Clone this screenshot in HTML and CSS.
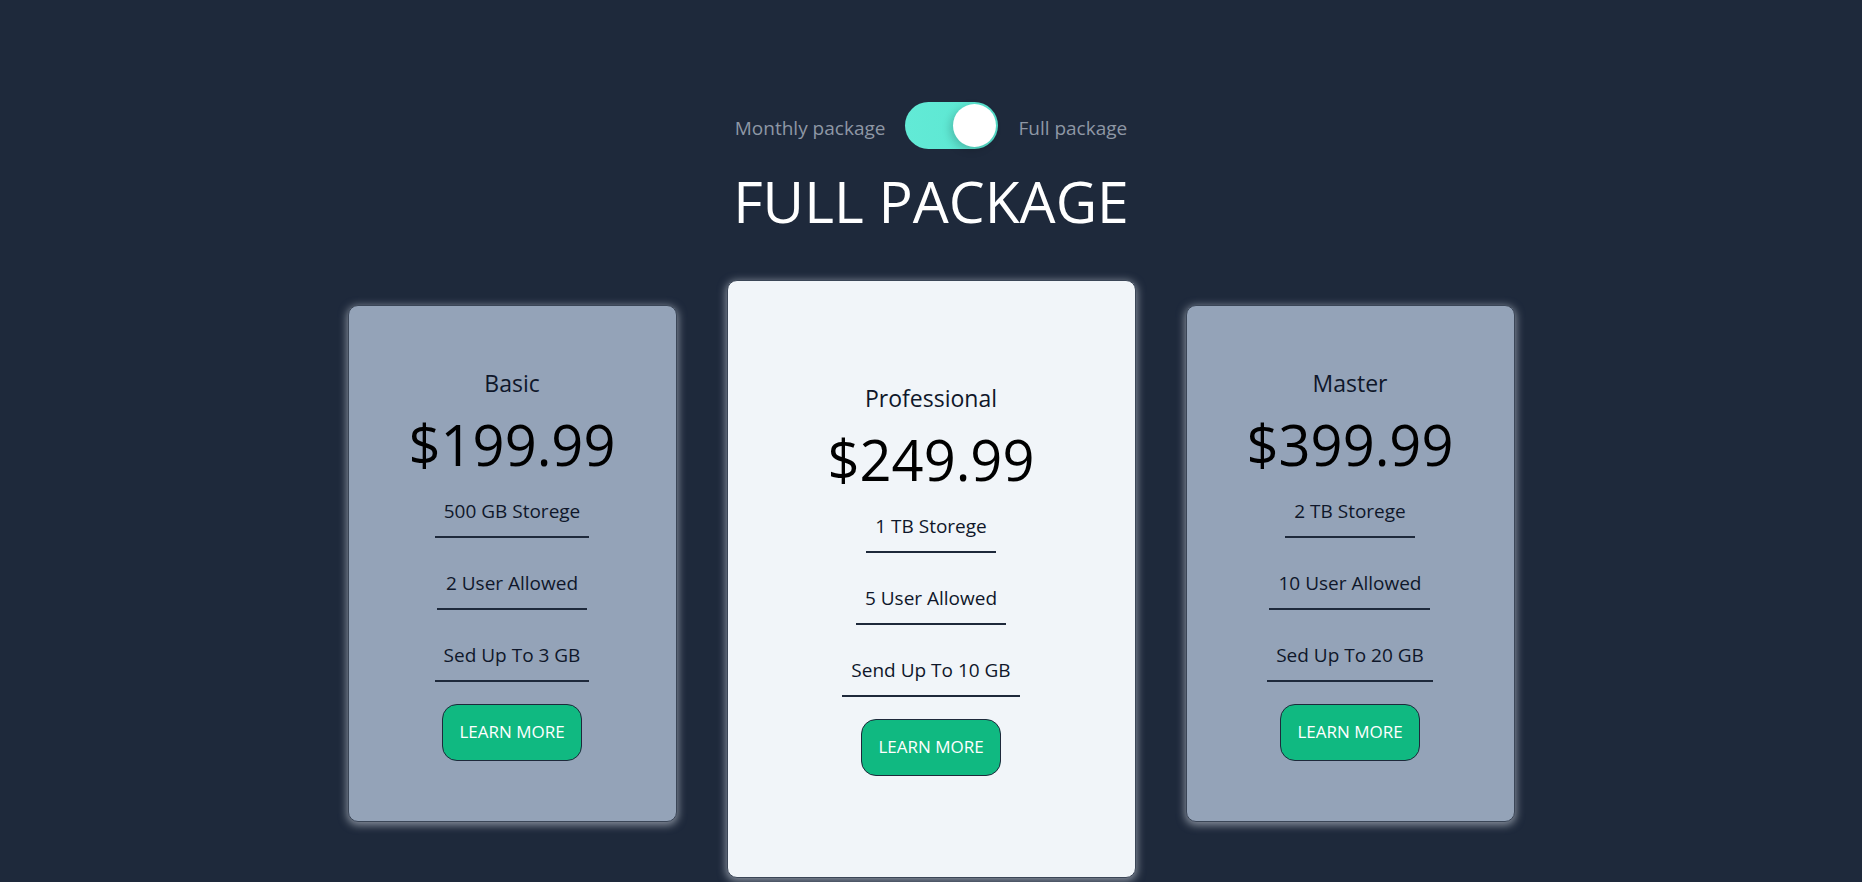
FILE: index.html
```html
<!DOCTYPE html>
<html lang="en">
<head>
<meta charset="utf-8">
<title>Pricing</title>
<link rel="stylesheet" href="styles.css">
</head>
<body>
<main class="page">
  <div class="switcher">
    <span class="switch-label">Monthly package</span>
    <span class="switch"><span class="knob"></span></span>
    <span class="switch-label">Full package</span>
  </div>
  <h1 class="title">FULL PACKAGE</h1>
  <section class="plans">
    <article class="card side">
      <h2 class="plan-name">Basic</h2>
      <p class="price">$199.99</p>
      <ul class="features">
        <li>500 GB Storege</li>
        <li>2 User Allowed</li>
        <li>Sed Up To 3 GB</li>
      </ul>
      <button class="btn">LEARN MORE</button>
    </article>
    <article class="card featured">
      <h2 class="plan-name">Professional</h2>
      <p class="price">$249.99</p>
      <ul class="features">
        <li>1 TB Storege</li>
        <li>5 User Allowed</li>
        <li>Send Up To 10 GB</li>
      </ul>
      <button class="btn">LEARN MORE</button>
    </article>
    <article class="card side">
      <h2 class="plan-name">Master</h2>
      <p class="price">$399.99</p>
      <ul class="features">
        <li>2 TB Storege</li>
        <li>10 User Allowed</li>
        <li>Sed Up To 20 GB</li>
      </ul>
      <button class="btn">LEARN MORE</button>
    </article>
  </section>
</main>
</body>
</html>
```
FILE: styles.css
```css
* { box-sizing: border-box; }
html, body { margin: 0; padding: 0; }
body {
  background: #1e293b;
  font-family: "Open Sans", "Noto Sans", sans-serif;
  height: 882px;
  overflow: hidden;
}
.page {
  display: flex;
  flex-direction: column;
  align-items: center;
  padding-top: 102px;
}
.switcher {
  display: flex;
  align-items: center;
  gap: 20px;
  height: 47px;
}
.switch-label {
  font-size: 19px;
  line-height: 26px;
  padding-top: 4px;
  color: #8e97a5;
}
.switch {
  width: 93px;
  height: 47px;
  border-radius: 24px;
  background: linear-gradient(90deg, #62ead6 0%, #5ee8d3 60%, #54dcc8 100%);
  display: flex;
  align-items: center;
  justify-content: flex-end;
  padding-right: 2px;
}
.knob {
  width: 43px;
  height: 43px;
  border-radius: 50%;
  background: #ffffff;
  box-shadow: -3px 3px 8px rgba(0, 0, 0, 0.18);
}
.title {
  margin: 19px 0 0;
  font-size: 57px;
  line-height: 67px;
  font-weight: 400;
  color: #ffffff;
}
.plans {
  margin-top: 45px;
  display: flex;
  align-items: flex-start;
  gap: 50px;
}
.card {
  display: flex;
  flex-direction: column;
  align-items: center;
  justify-content: center;
  border: 1px solid #3b4657;
  border-radius: 10px;
  box-shadow: 0 2px 8px 1px rgba(226, 232, 240, 0.55);
  color: #000000;
}
.side {
  width: 329px;
  height: 517px;
  margin-top: 25px;
  background: #94a3b8;
}
.featured {
  width: 409px;
  height: 598px;
  background: #f1f5f9;
}
.plan-name {
  margin: 0;
  font-size: 23px;
  line-height: 32px;
  font-weight: 400;
  color: #0f172a;
}
.price {
  margin: 13px 0 0;
  font-size: 56px;
  line-height: 64px;
}
.features {
  list-style: none;
  margin: 10px 0 0;
  padding: 0;
  display: flex;
  flex-direction: column;
  align-items: center;
}
.features li {
  font-size: 19px;
  line-height: 26px;
  color: #0f172a;
  padding: 12px 9px 12px;
  margin-top: 20px;
  border-bottom: 2px solid #1e293b;
}
.features li:first-child { margin-top: 0; }
.btn {
  margin-top: 22px;
  font-family: inherit;
  font-size: 17px;
  line-height: 24px;
  color: #ffffff;
  background: #10b981;
  border: 1px solid #1e293b;
  border-radius: 15px;
  padding: 15px 16px 16px;
  cursor: pointer;
}
```
